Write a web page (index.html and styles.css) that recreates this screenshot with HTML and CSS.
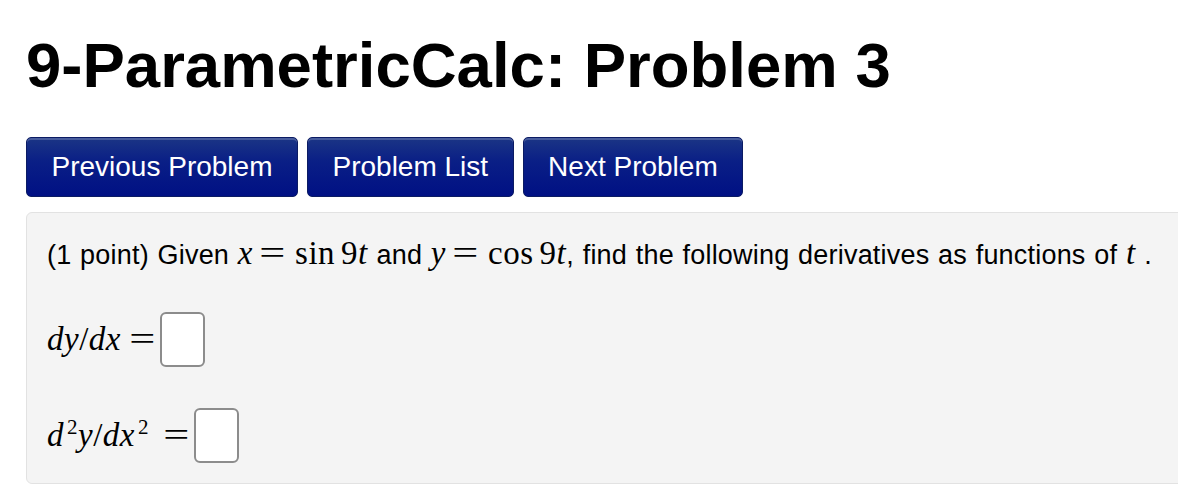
FILE: index.html
```html
<!DOCTYPE html>
<html lang="en">
<head>
    <meta charset="UTF-8">
    <meta name="viewport" content="width=device-width, initial-scale=1.0">
    <title>9-ParametricCalc: Problem 3</title>
    <link rel="stylesheet" href="styles.css">
</head>
<body>
    <div class="page">
        <h1 class="title">9-ParametricCalc: Problem 3</h1>

        <div class="nav">
            <a href="#" class="nav-btn">Previous Problem</a>
            <a href="#" class="nav-btn">Problem List</a>
            <a href="#" class="nav-btn">Next Problem</a>
        </div>

        <div class="problem">
            <p class="statement">
                (1 point) Given <span class="math"><i>x</i><span class="op">=</span>sin<span class="thin"></span>9<i>t</i></span>
                and <span class="math"><i>y</i><span class="op">=</span>cos<span class="thin"></span>9<i>t</i></span>,
                find the following derivatives as functions of <span class="math"><i>t</i></span> .
            </p>
            <p class="answer">
                <span class="math"><i>dy</i>/<i>dx</i><span class="op">=</span></span>
                <input type="text" class="ans-box">
            </p>
            <p class="answer">
                <span class="math"><i>d</i><sup>2</sup><i>y</i>/<i>dx</i><sup>2</sup><span class="op wide">=</span></span>
                <input type="text" class="ans-box">
            </p>
        </div>
    </div>
</body>
</html>
```

FILE: styles.css
```css
* {
    margin: 0;
    padding: 0;
    box-sizing: border-box;
}
body {
    font-family: "Liberation Sans", Arial, sans-serif;
    color: #000;
    background: #fff;
    overflow: hidden;
}
.page {
    padding: 30px 0 0 26px;
}
.title {
    font-size: 63.5px;
    line-height: 70px;
    font-weight: bold;
}

/* nav buttons */
.nav {
    display: flex;
    gap: 9px;
    margin-top: 37px;
}
.nav-btn {
    display: flex;
    align-items: center;
    height: 60px;
    padding: 0 24.5px;
    font-size: 28px;
    color: #fff;
    text-decoration: none;
    border: 1px solid #0b1b63;
    border-radius: 5px;
    background: linear-gradient(#1b3585, #0a1f86 40%, #001084);
    box-shadow: inset 0 2px 0 rgba(255, 255, 255, 0.2);
}

/* problem box */
.problem {
    margin-top: 15px;
    margin-right: -20px;
    background-color: #f4f4f4;
    border: 1px solid #e2e2e2;
    border-radius: 6px;
    padding: 23px 20px 18px 20px;
    height: 272px;
}
.statement {
    font-size: 27px;
    line-height: 34px;
    letter-spacing: 0.2px;
    word-spacing: 1px;
}
.math {
    font-family: "Liberation Serif", "Times New Roman", serif;
    font-size: 33px;
    letter-spacing: 0.5px;
    word-spacing: 0;
}
.math i {
    font-style: italic;
}
.math sup {
    font-size: 21px;
    line-height: 0;
    margin-left: 3px;
}
.op {
    display: inline-block;
    margin: 0 13px 0 10px;
    transform: scaleX(1.4);
}
.thin {
    display: inline-block;
    width: 6px;
}
.answer {
    display: flex;
    align-items: center;
    margin-top: 40px;
}
.answer .op {
    margin-left: 12px;
    margin-right: 8px;
}
.answer .op.wide {
    margin-left: 18px;
}
.answer + .answer {
    margin-top: 41px;
}
.ans-box {
    width: 45px;
    height: 55px;
    border: 2px solid #8c8c8c;
    border-radius: 6px;
    background: #fff;
}
```
